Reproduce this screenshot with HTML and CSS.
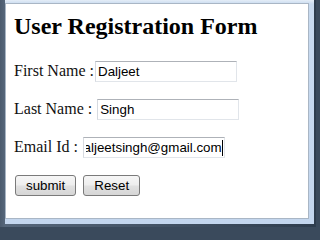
FILE: index.html
```html
<!DOCTYPE html>
<html>
<head>
<meta charset="utf-8">
<link rel="stylesheet" href="styles.css">
</head>
<body>
<div class="desktop">
  <div class="frame">
    <div class="page">
      <h1 class="title">User Registration Form</h1>
      <form class="form">
        <div class="row"><label class="label">First Name :</label> <input class="field" type="text" value="Daljeet"></div>
        <div class="row"><label class="label">Last Name : </label> <input class="field" type="text" value="Singh"></div>
        <div class="row"><label class="label">Email Id : </label> <span class="caret-wrap"><input class="field" id="email" type="text" value="Daljeetsingh@gmail.com"></span></div>
        <div class="buttons"><button class="btn" type="button">submit</button><button class="btn" type="button">Reset</button></div>
      </form>
    </div>
  </div>
</div>
<script src="script.js"></script>
</body>
</html>
```
FILE: styles.css
```css
html, body {
  margin: 0;
  padding: 0;
}
body {
  width: 316px;
  height: 227px;
  overflow: hidden;
  background: #3a4a5c;
}
.desktop {
  padding: 0 2px 3px 5px;
  background: linear-gradient(90deg, #4b5b6e 0, #56677b 5px, #2e3d4e 100%);
  height: 227px;
  box-sizing: border-box;
}
.frame {
  padding: 3px 5px 5px 0;
  background: linear-gradient(180deg, #e4edf7 0, #c8daef 4px, #c3d6ee 100%);
  height: 224px;
  box-sizing: border-box;
}
.page {
  background: #ffffff;
  border: 1px solid #a9b6c5;
  height: 216px;
  box-sizing: border-box;
  padding: 0 8px;
  font-family: "Liberation Serif", "Times New Roman", serif;
  color: #111;
}
.title {
  font-size: 24px;
  font-weight: bold;
  margin: 9px 0 21px 0;
  line-height: normal;
  color: #000;
}
.form {
  display: flex;
  flex-direction: column;
  gap: 17px;
}
.row {
  display: flex;
  align-items: baseline;
}
.label {
  font-size: 16px;
  white-space: pre;
  margin-right: 1px;
}
.caret-wrap {
  position: relative;
  display: inline-flex;
}
.caret-wrap::after {
  content: "";
  position: absolute;
  right: 2px;
  top: 3px;
  width: 1px;
  height: 16px;
  background: #000;
}
.field {
  width: 142px;
  height: 21px;
  box-sizing: border-box;
  border: 1px solid #e1e5ea;
  border-top-color: #aeb2b8;
  border-left-color: #d6dae0;
  padding: 1px 2px;
  margin: 0;
  font-family: "Liberation Sans", Arial, sans-serif;
  font-size: 13.33px;
  color: #000;
  background: #fff;
  outline: none;
  caret-color: transparent;
}
.buttons {
  display: flex;
  gap: 7px;
  margin-left: 1px;
}
.btn {
  height: 21px;
  box-sizing: border-box;
  padding: 0 10px;
  border: 1px solid #7a7a7a;
  border-radius: 3px;
  background: linear-gradient(180deg, #f6f6f6 0%, #eeeeee 45%, #e0e0e0 55%, #d6d6d6 100%);
  font-family: "Liberation Sans", Arial, sans-serif;
  font-size: 13.33px;
  color: #000;
  margin: 0;
}
```
FILE: script.js
```js
var e = document.getElementById('email');
e.focus();
e.setSelectionRange(e.value.length, e.value.length);
e.scrollLeft = e.scrollWidth;
```
